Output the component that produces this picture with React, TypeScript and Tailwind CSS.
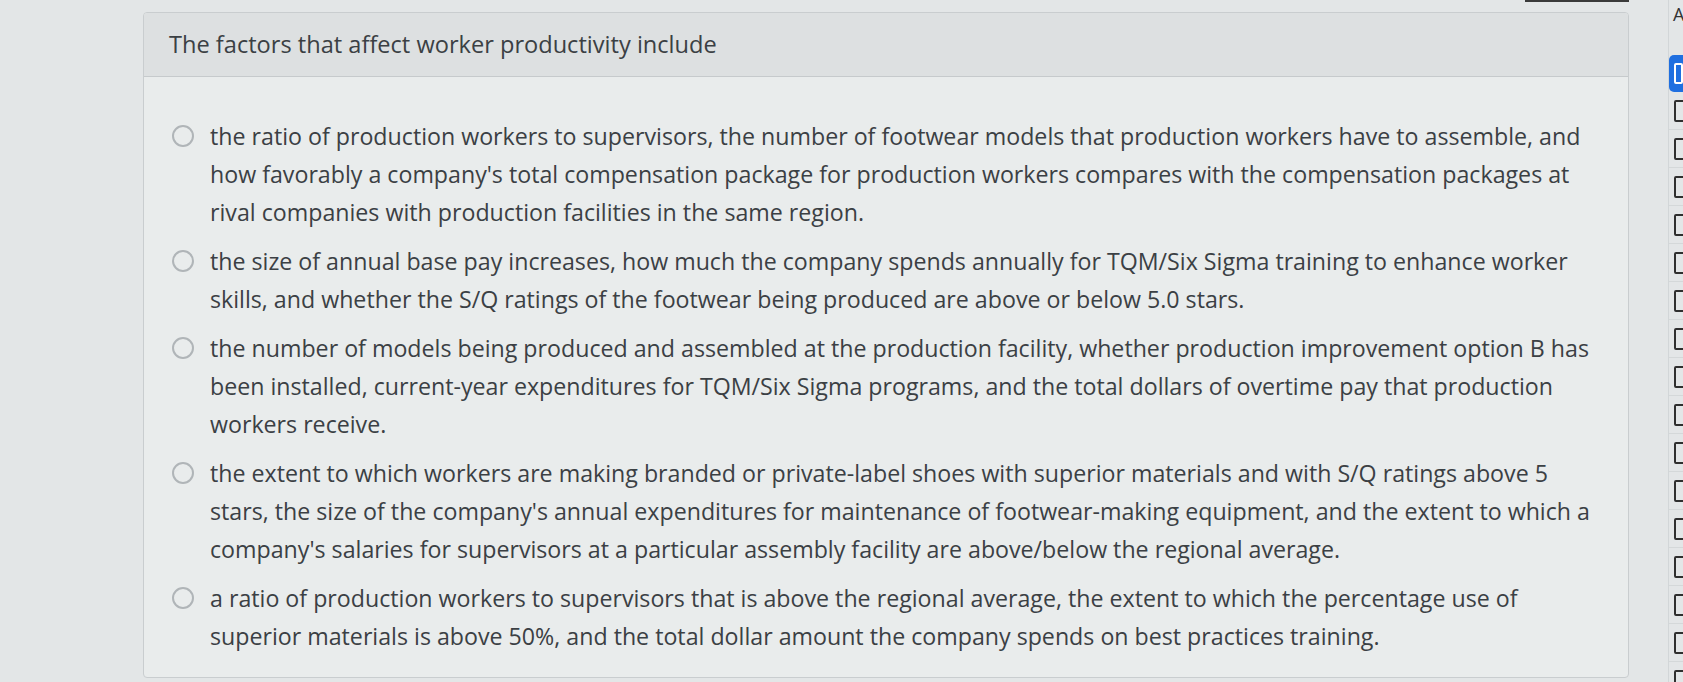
import React from 'react';

const options = [
  "the ratio of production workers to supervisors, the number of footwear models that production workers have to assemble, and how favorably a company's total compensation package for production workers compares with the compensation packages at rival companies with production facilities in the same region.",
  'the size of annual base pay increases, how much the company spends annually for TQM/Six Sigma training to enhance worker skills, and whether the S/Q ratings of the footwear being produced are above or below 5.0 stars.',
  'the number of models being produced and assembled at the production facility, whether production improvement option B has been installed, current-year expenditures for TQM/Six Sigma programs, and the total dollars of overtime pay that production workers receive.',
  "the extent to which workers are making branded or private-label shoes with superior materials and with S/Q ratings above 5 stars, the size of the company's annual expenditures for maintenance of footwear-making equipment, and the extent to which a company's salaries for supervisors at a particular assembly facility are above/below the regional average.",
  'a ratio of production workers to supervisors that is above the regional average, the extent to which the percentage use of superior materials is above 50%, and the total dollar amount the company spends on best practices training.',
];

const navRows = Array.from({ length: 16 }, (_, i) => i);

export default function App() {
  return (
    <div className="flex h-[682px] w-full overflow-hidden bg-[#e3e6e7] font-['Open_Sans',sans-serif] text-[#3b4044]">
      {/* Question card */}
      <div className="flex flex-col pl-[143px]">
        <div className="ml-auto h-[2px] w-[104px] bg-[#3a3a3a]" />
        <div className="mt-[10px] w-[1486px] overflow-hidden rounded-[4px] border border-[#c9cdcf] bg-[#e9ecec]">
          <div className="flex h-[64px] items-center border-b border-[#c6cacc] bg-[#dde0e1] pl-[25px] text-[23.6px]">
            The factors that affect worker productivity include
          </div>
          <div className="flex flex-col gap-[11px] pb-[22px] pl-[28px] pr-[19px] pt-[40px]">
            {options.map((text, i) => (
              <label key={i} className="flex cursor-pointer items-start gap-[16px]">
                <span className="mt-[8px] h-[22px] w-[22px] shrink-0 rounded-full border-2 border-[#b0b5b8]" />
                <span className="text-[23.2px] leading-[38px]">{text}</span>
              </label>
            ))}
          </div>
        </div>
      </div>

      {/* Right question navigator */}
      <div className="ml-[39px] flex w-[15px] shrink-0 flex-col border-l border-[#d2d6d8]">
        <div className="h-[55px] shrink-0 pl-[4px] pt-[1px] text-[18px] text-[#333]">A</div>
        <div className="flex h-[37px] shrink-0 items-center rounded-l-[5px] bg-[#1f6fe0] pl-[5px]">
          <div className="h-[21px] w-[21px] rounded-[2px] border-2 border-white" />
        </div>
        {navRows.map((r) => (
          <div key={r} className="flex h-[38px] shrink-0 items-center border-b border-[#d4d8d9] pl-[5px]">
            <div className="h-[22px] w-[22px] shrink-0 rounded-[2px] border-2 border-[#2f2f2f]" />
          </div>
        ))}
      </div>
    </div>
  );
}
